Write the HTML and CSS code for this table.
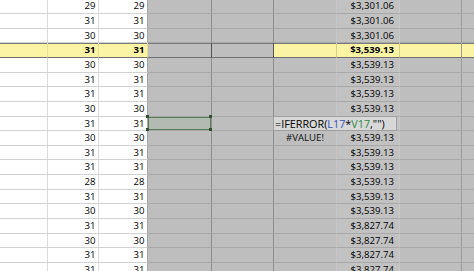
FILE: index.html
```html
<!DOCTYPE html>
<html>
<head>
<meta charset="utf-8">
<link rel="stylesheet" href="styles.css">
</head>
<body>
<div class="sheet">
  <div class="row"><div class="a"></div><div class="b n">29</div><div class="c n">29</div><div class="d"></div><div class="e"></div><div class="f"></div><div class="g n">$3,301.06</div><div class="h"></div><div class="i"></div></div>
  <div class="row"><div class="a"></div><div class="b n">31</div><div class="c n">31</div><div class="d"></div><div class="e"></div><div class="f"></div><div class="g n">$3,301.06</div><div class="h"></div><div class="i"></div></div>
  <div class="row"><div class="a"></div><div class="b n">30</div><div class="c n">30</div><div class="d"></div><div class="e"></div><div class="f"></div><div class="g n">$3,301.06</div><div class="h"></div><div class="i"></div></div>
  <div class="row hl"><div class="a"></div><div class="b n">31</div><div class="c n">31</div><div class="d"></div><div class="e"></div><div class="f"></div><div class="g n">$3,539.13</div><div class="h"></div><div class="i"></div></div>
  <div class="row"><div class="a"></div><div class="b n">30</div><div class="c n">30</div><div class="d"></div><div class="e"></div><div class="f"></div><div class="g n">$3,539.13</div><div class="h"></div><div class="i"></div></div>
  <div class="row"><div class="a"></div><div class="b n">31</div><div class="c n">31</div><div class="d"></div><div class="e"></div><div class="f"></div><div class="g n">$3,539.13</div><div class="h"></div><div class="i"></div></div>
  <div class="row"><div class="a"></div><div class="b n">31</div><div class="c n">31</div><div class="d"></div><div class="e"></div><div class="f"></div><div class="g n">$3,539.13</div><div class="h"></div><div class="i"></div></div>
  <div class="row"><div class="a"></div><div class="b n">30</div><div class="c n">30</div><div class="d"></div><div class="e"></div><div class="f"></div><div class="g n">$3,539.13</div><div class="h"></div><div class="i"></div></div>
  <div class="row"><div class="a"></div><div class="b n">31</div><div class="c n">31</div><div class="d sel"><i class="hd tl"></i><i class="hd tr"></i><i class="hd bl"></i><i class="hd br"></i></div><div class="e"></div><div class="f edit-host"><div class="edit">=IFERROR(<span class="r1">L17</span>*<span class="r2">V17</span>,"")</div></div><div class="g n"></div><div class="h"></div><div class="i"></div></div>
  <div class="row"><div class="a"></div><div class="b n">30</div><div class="c n">30</div><div class="d"></div><div class="e"></div><div class="f err">#VALUE!</div><div class="g n">$3,539.13</div><div class="h"></div><div class="i"></div></div>
  <div class="row"><div class="a"></div><div class="b n">31</div><div class="c n">31</div><div class="d"></div><div class="e"></div><div class="f"></div><div class="g n">$3,539.13</div><div class="h"></div><div class="i"></div></div>
  <div class="row"><div class="a"></div><div class="b n">31</div><div class="c n">31</div><div class="d"></div><div class="e"></div><div class="f"></div><div class="g n">$3,539.13</div><div class="h"></div><div class="i"></div></div>
  <div class="row"><div class="a"></div><div class="b n">28</div><div class="c n">28</div><div class="d"></div><div class="e"></div><div class="f"></div><div class="g n">$3,539.13</div><div class="h"></div><div class="i"></div></div>
  <div class="row"><div class="a"></div><div class="b n">31</div><div class="c n">31</div><div class="d"></div><div class="e"></div><div class="f"></div><div class="g n">$3,539.13</div><div class="h"></div><div class="i"></div></div>
  <div class="row"><div class="a"></div><div class="b n">30</div><div class="c n">30</div><div class="d"></div><div class="e"></div><div class="f"></div><div class="g n">$3,539.13</div><div class="h"></div><div class="i"></div></div>
  <div class="row"><div class="a"></div><div class="b n">31</div><div class="c n">31</div><div class="d"></div><div class="e"></div><div class="f"></div><div class="g n">$3,827.74</div><div class="h"></div><div class="i"></div></div>
  <div class="row"><div class="a"></div><div class="b n">30</div><div class="c n">30</div><div class="d"></div><div class="e"></div><div class="f"></div><div class="g n">$3,827.74</div><div class="h"></div><div class="i"></div></div>
  <div class="row"><div class="a"></div><div class="b n">31</div><div class="c n">31</div><div class="d"></div><div class="e"></div><div class="f"></div><div class="g n">$3,827.74</div><div class="h"></div><div class="i"></div></div>
  <div class="row"><div class="a"></div><div class="b n">31</div><div class="c n">31</div><div class="d"></div><div class="e"></div><div class="f"></div><div class="g n">$3,827.74</div><div class="h"></div><div class="i"></div></div>
</div>
</body>
</html>
```
FILE: styles.css
```css
html, body {
  margin: 0;
  height: 100%;
  overflow: hidden;
  background: #bfbfbf;
}
body {
  font-family: "Open Sans", "Liberation Sans", sans-serif;
  font-size: 9.6px;
  font-weight: 500;
  color: #000000;
}
.sheet {
  margin-top: -0.6px;
  display: flex;
  flex-direction: column;
}
.row {
  display: grid;
  grid-template-columns: 48px 51px 49px 64px 62px 63px 63px 62px 20px;
  height: 14.65px;
}
.row > div {
  box-sizing: border-box;
  border-right: 1px solid #a4a4a4;
  border-bottom: 1px solid #a8a8a8;
  line-height: 13px;
  white-space: nowrap;
  background: #bebebe;
}
.row > .a, .row > .b, .row > .c {
  background: #ffffff;
  border-right-color: #dadada;
  border-bottom-color: #d2d2d2;
}
.row > .c { border-right-color: #a6a6a6; }
.row > .d, .row > .e { border-right-color: #8e8e8e; }
.row > .f { border-right-color: #c6c6c6; }
.row > .g { background: #c2c2c2; border-right-color: #c8c8c8; }
.row > .h { border-right-color: #9c9c9c; }
.n {
  text-align: right;
  padding-right: 2.5px;
}
.row > .g.n { padding-right: 5px; }

/* highlighted row */
.hl > div {
  font-weight: 700;
  border-bottom-color: #707070 !important;
  box-shadow: inset 0 1px #7a7a7a;
}
.row.hl > div { line-height: 14px; }
.row.hl > .a, .row.hl > .b, .row.hl > .c,
.row.hl > .f, .row.hl > .g, .row.hl > .h, .row.hl > .i {
  background: #fbf4a4;
}
.row.hl > .a, .row.hl > .b, .row.hl > .c { border-right-color: #e6dfa0; }
.row.hl > .f, .row.hl > .g { border-right-color: #d8d090; }
.row.hl > .d, .row.hl > .e { border-right-color: #555555; }

/* selected cell */
.row > .sel {
  position: relative;
  background: #b3bab2;
  box-shadow: inset 0 0 0 1px #5b7b5b;
}
.hd {
  position: absolute;
  width: 3px;
  height: 3px;
  background: #2f4f2f;
}
.tl { left: -2px; top: -2px; }
.tr { right: -1px; top: -2px; }
.bl { left: -2px; bottom: -1px; }
.br { right: -1px; bottom: -1px; }

/* in-cell editor */
.edit-host { position: relative; overflow: visible; }
.edit {
  position: absolute;
  left: -1px;
  top: -1px;
  width: 124px;
  height: 15px;
  box-sizing: border-box;
  background: #d8d8d8;
  border: 1px solid #a0a0a0;
  padding-left: 1px;
  line-height: 13px;
  font-size: 10.8px;
  color: #000;
  z-index: 2;
}
.r1 { color: #3452c4; }
.r2 { color: #2e8a48; }
.err {
  text-align: center;
  color: #111;
}
```
